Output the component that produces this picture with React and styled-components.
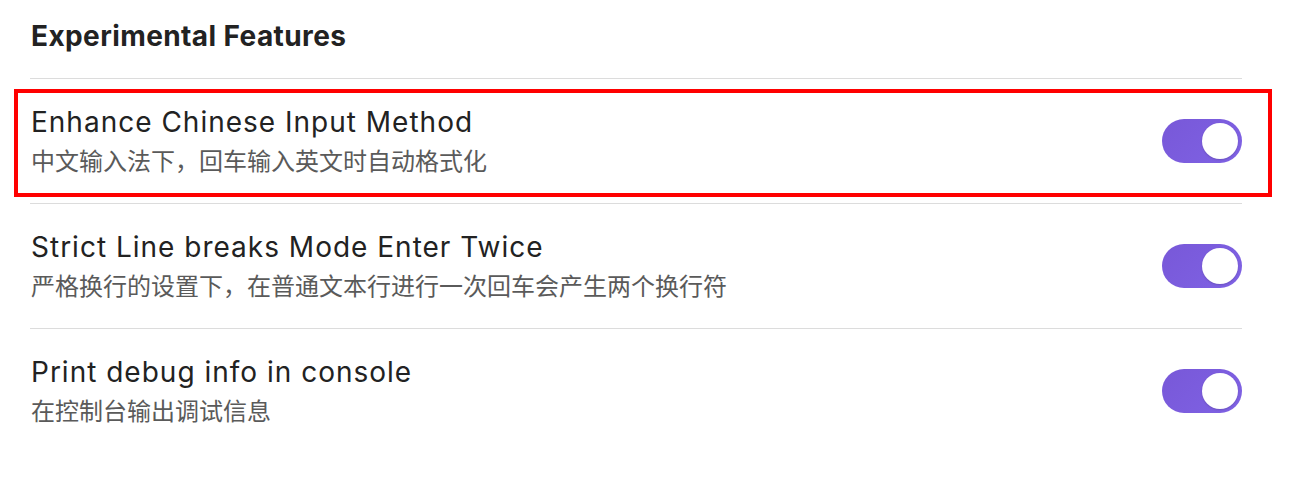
import React from "react";
import styled, { createGlobalStyle } from "styled-components";

const GlobalStyle = createGlobalStyle`
  html, body {
    margin: 0;
    padding: 0;
    background: #ffffff;
  }
  body {
    font-family: Inter, "Noto Sans CJK SC", sans-serif;
    -webkit-font-smoothing: antialiased;
  }
`

const Page = styled.div`
  padding: 17px 52px 0 30px;
`

const Heading = styled.h2`
  margin: 0 0 0 1px;
  height: 61px;
  font-size: 28px;
  font-weight: 700;
  line-height: 38px;
  color: #222222;
  letter-spacing: 0.4px;
`

const List = styled.div`
  display: flex;
  flex-direction: column;
`

const Row = styled.div`
  position: relative;
  display: flex;
  align-items: center;
  justify-content: space-between;
  height: 124px;
  border-top: 1px solid #dcdcdc;

  ${props => props.$highlight && `
    &::after {
      content: "";
      position: absolute;
      top: 10px;
      bottom: 6px;
      left: -16px;
      right: -30px;
      border: 4px solid #ff0000;
      pointer-events: none;
    }
  `}
`

const Info = styled.div`
  display: flex;
  flex-direction: column;
  padding-left: 1px;
`

const Title = styled.div`
  font-size: 28px;
  line-height: 36px;
  letter-spacing: 1px;
  color: #222222;
`

const Description = styled.div`
  margin-top: 5px;
  font-size: 24px;
  line-height: 34px;
  color: #5a5a5a;
`

const Toggle = styled.div`
  flex: none;
  display: flex;
  align-items: center;
  justify-content: ${props => (props.$on ? "flex-end" : "flex-start")};
  box-sizing: border-box;
  width: 80px;
  height: 44px;
  padding: 4px;
  border-radius: 22px;
  background: ${props => (props.$on ? "linear-gradient(135deg, #7858d8, #7f62e4)" : "#d0d0d0")};
  cursor: pointer;
`

const Knob = styled.div`
  width: 36px;
  height: 36px;
  border-radius: 50%;
  background: #ffffff;
  box-shadow: 0 1px 2px rgba(0, 0, 0, 0.15);
`

const settings = [
  {
    title: "Enhance Chinese Input Method",
    desc: "中文输入法下，回车输入英文时自动格式化",
    highlight: true
  },
  {
    title: "Strict Line breaks Mode Enter Twice",
    desc: "严格换行的设置下，在普通文本行进行一次回车会产生两个换行符"
  },
  {
    title: "Print debug info in console",
    desc: "在控制台输出调试信息"
  }
];

export default function App() {
  return (
    <Page>
      <GlobalStyle />
      <Heading>Experimental Features</Heading>
      <List>
        {settings.map(item => (
          <Row key={item.title} $highlight={item.highlight}>
            <Info>
              <Title>{item.title}</Title>
              <Description>{item.desc}</Description>
            </Info>
            <Toggle $on>
              <Knob />
            </Toggle>
          </Row>
        ))}
      </List>
    </Page>
  );
}
